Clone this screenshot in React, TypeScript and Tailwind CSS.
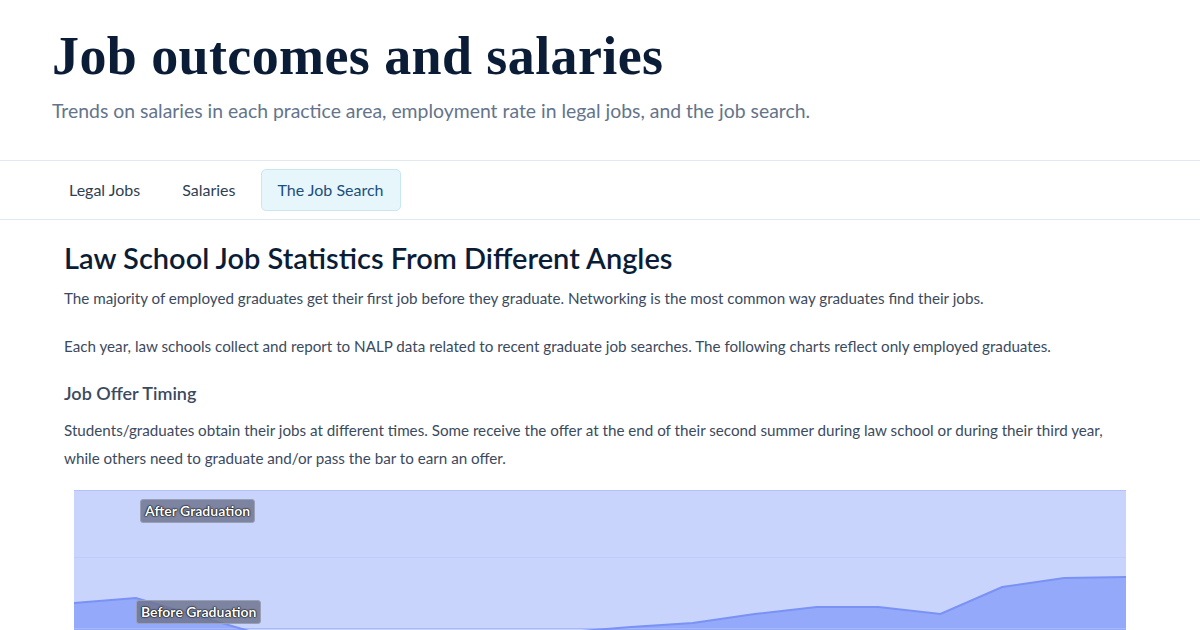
import React from 'react';

const sans = { fontFamily: 'Lato, "Noto Sans", sans-serif' };

const tabs = ['Legal Jobs', 'Salaries', 'The Job Search'];

// before-graduation series, in svg coords (chart is 1052 wide)
const pts = [113, 108, 126, 144, 158, 165, 160, 150, 142, 137, 133, 124, 117, 117, 124, 97, 88, 87];

const labelShadow = '0 0 2px #000, 0 0 1px #000, 0 0 1px #000';

function OfferChart() {
  const w = 1052;
  const h = 300;
  const step = w / (pts.length - 1);
  const line = pts.map((y, i) => `${(i * step).toFixed(1)},${y}`).join(' ');
  const area = `0,${h} ${line} ${w},${h}`;
  return (
    <div className="relative mx-[10px] mt-[18px]">
      <svg width={w} height={h} viewBox={`0 0 ${w} ${h}`} className="block">
        <rect x="0" y="0" width={w} height={h} fill="#c9d4fd" />
        <line x1="0" y1="0.5" x2={w} y2="0.5" stroke="#b2c1fb" />
        <line x1="0" y1="67.5" x2={w} y2="67.5" stroke="#bfcbfc" />
        <polygon points={area} fill="#94a9fa" />
        <line x1="0" y1="138.5" x2={w} y2="138.5" stroke="#a6b7fb" />
        <polyline points={line} fill="none" stroke="#7a92f4" strokeWidth="2" />
      </svg>
      <div
        className="absolute left-[66px] top-[9px] rounded-[3px] border border-[#9aa0b4] bg-[#6e7590]/85 px-[4px] py-[1px] text-[14px] font-bold leading-[20px] text-white"
        style={{ ...sans, textShadow: labelShadow }}
      >
        After Graduation
      </div>
      <div
        className="absolute left-[62px] top-[110px] rounded-[3px] border border-[#9aa0b4] bg-[#6e7590]/85 px-[4px] py-[1px] text-[14px] font-bold leading-[20px] text-white"
        style={{ ...sans, textShadow: labelShadow }}
      >
        Before Graduation
      </div>
    </div>
  );
}

export default function App() {
  return (
    <div className="min-h-screen bg-white" style={sans}>
      <header className="h-[160px] px-[52px] pt-[24px]">
        <h1
          className="text-[54px] font-bold leading-[64px] tracking-[0.4px] text-[#0b1d36]"
          style={{ fontFamily: '"Liberation Serif", "DejaVu Serif", serif' }}
        >
          Job outcomes and salaries
        </h1>
        <p className="mt-[10px] text-[19.4px] leading-[26px] text-[#64748b]">
          Trends on salaries in each practice area, employment rate in legal jobs, and the job search.
        </p>
      </header>

      <nav className="flex h-[60px] items-center gap-[8px] border-y border-[#e2e8f0] px-[52px]">
        {tabs.map((t) => (
          <button
            key={t}
            className={`h-[42px] rounded-[5px] border px-[16px] text-[16px] ${
              t === 'The Job Search'
                ? 'border-[#c8e7f1] bg-[#e7f6fb] text-[#1c4f7c]'
                : 'border-transparent text-[#2f3e52]'
            }`}
          >
            {t}
          </button>
        ))}
      </nav>

      <main className="px-[64px] pt-[20px]">
        <h2 className="text-[29px] font-semibold leading-[36px] text-[#0b1d36]">
          Law School Job Statistics From Different Angles
        </h2>
        <p className="mt-[12px] text-[15.2px] leading-[20px] text-[#3b4a5e]">
          The majority of employed graduates get their first job before they graduate. Networking is the most common
          way graduates find their jobs.
        </p>
        <p className="mt-[28px] text-[15.2px] leading-[20px] text-[#3b4a5e]">
          Each year, law schools collect and report to NALP data related to recent graduate job searches. The following
          charts reflect only employed graduates.
        </p>
        <h3 className="mt-[25px] text-[18px] font-semibold leading-[24px] text-[#3b4a5e]">Job Offer Timing</h3>
        <p className="mt-[11px] max-w-[1060px] text-[15.2px] leading-[28px] text-[#3b4a5e]">
          Students/graduates obtain their jobs at different times. Some receive the offer at the end of their second
          summer during law school or during their third year, while others need to graduate and/or pass the bar to earn
          an offer.
        </p>
        <OfferChart />
      </main>
    </div>
  );
}
